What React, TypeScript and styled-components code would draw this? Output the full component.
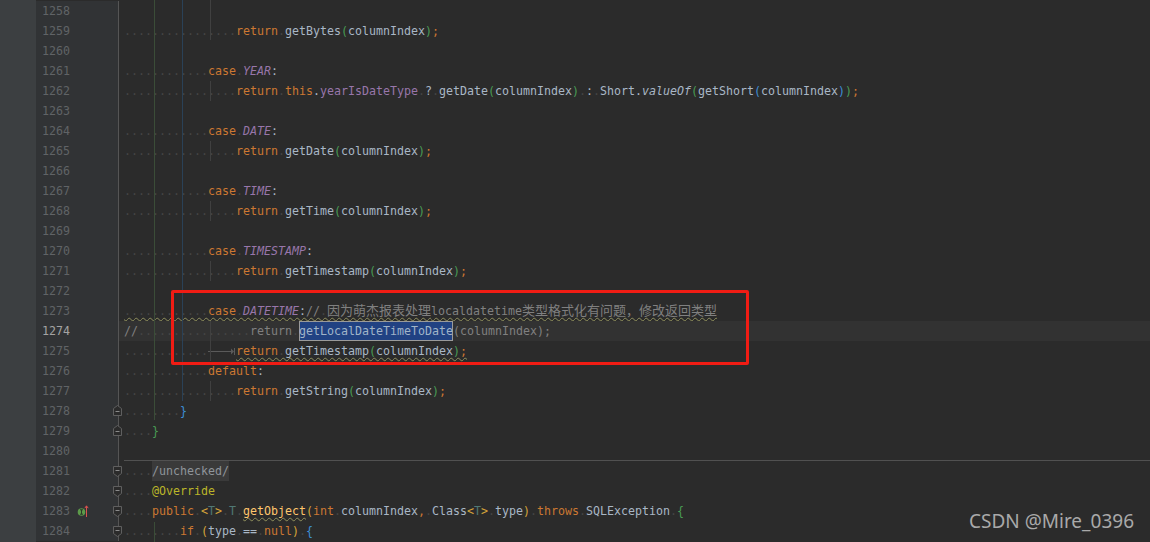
import React from "react";
import styled, { createGlobalStyle } from "styled-components";

type Kind = "dot" | "kw" | "plain" | "field" | "constant" | "method" | "green" | "blue" | "amber" | "semi" | "decl" | "anno" | "typeVar" | "comment" | "tag";
type Token = { kind: Kind; text: string; wavy?: boolean; selected?: boolean; cjk?: boolean };

interface Line {
  n: number;
  tokens?: Token[];
  active?: boolean;
  fold?: "start" | "end";
  marker?: boolean;
  separator?: boolean;
  wavyRow?: boolean;
}

const t = (kind: Kind, text: string, wavy?: boolean): Token => ({ kind, text, wavy });
const dots = (n: number) => t("dot", ".".repeat(n));

const ret = (name: string): Token[] => [
  dots(16),
  t("kw", "return"),
  dots(1),
  t("plain", name),
  t("green", "("),
  t("plain", "columnIndex"),
  t("green", ")"),
  t("semi", ";"),
];

const caseOf = (name: string): Token[] => [dots(12), t("kw", "case"), dots(1), t("constant", name), t("plain", ":")];

const lines: Line[] = [
  { n: 1258 },
  { n: 1259, tokens: ret("getBytes") },
  { n: 1260 },
  { n: 1261, tokens: caseOf("YEAR") },
  {
    n: 1262,
    tokens: [
      dots(16),
      t("kw", "return"),
      dots(1),
      t("kw", "this"),
      t("plain", "."),
      t("field", "yearIsDateType"),
      dots(1),
      t("plain", "?"),
      dots(1),
      t("plain", "getDate"),
      t("green", "("),
      t("plain", "columnIndex"),
      t("green", ")"),
      dots(1),
      t("plain", ":"),
      dots(1),
      t("plain", "Short."),
      t("method", "valueOf"),
      t("green", "("),
      t("plain", "getShort"),
      t("blue", "("),
      t("plain", "columnIndex"),
      t("blue", ")"),
      t("green", ")"),
      t("semi", ";"),
    ],
  },
  { n: 1263 },
  { n: 1264, tokens: caseOf("DATE") },
  { n: 1265, tokens: ret("getDate") },
  { n: 1266 },
  { n: 1267, tokens: caseOf("TIME") },
  { n: 1268, tokens: ret("getTime") },
  { n: 1269 },
  { n: 1270, tokens: caseOf("TIMESTAMP") },
  { n: 1271, tokens: ret("getTimestamp") },
  { n: 1272 },
  {
    n: 1273,
    wavyRow: true,
    tokens: [
      ...caseOf("DATETIME"),
      t("comment", "//"),
      dots(1),
      { kind: "comment", text: "因为萌杰报表处理", cjk: true },
      t("comment", "localdatetime"),
      { kind: "comment", text: "类型格式化有问题，修改返回类型", cjk: true },
    ],
  },
  {
    n: 1274,
    active: true,
    tokens: [
      t("comment", "//"),
      dots(16),
      t("comment", "return"),
      dots(1),
      { kind: "plain", text: "getLocalDateTimeToDate", selected: true },
      t("comment", "(columnIndex);"),
    ],
  },
  {
    n: 1275,
    tokens: [
      dots(12),
      t("tag", "TAB"),
      t("kw", "return", true),
      t("dot", ".", true),
      t("plain", "getTimestamp", true),
      t("green", "(", true),
      t("plain", "columnIndex", true),
      t("green", ")", true),
      t("semi", ";", true),
    ],
  },
  { n: 1276, tokens: [dots(12), t("kw", "default"), t("plain", ":")] },
  { n: 1277, tokens: ret("getString") },
  { n: 1278, fold: "end", tokens: [dots(8), t("blue", "}")] },
  { n: 1279, fold: "end", tokens: [dots(4), t("green", "}")] },
  { n: 1280, separator: true },
  { n: 1281, fold: "start", tokens: [dots(4), t("tag", "/unchecked/")] },
  { n: 1282, fold: "start", tokens: [dots(4), t("anno", "@Override")] },
  {
    n: 1283,
    fold: "start",
    marker: true,
    tokens: [
      dots(4),
      t("kw", "public"),
      dots(1),
      t("amber", "<"),
      t("typeVar", "T"),
      t("amber", ">"),
      dots(1),
      t("typeVar", "T"),
      dots(1),
      t("decl", "getObject", true),
      t("amber", "("),
      t("kw", "int"),
      dots(1),
      t("plain", "columnIndex"),
      t("semi", ","),
      dots(1),
      t("plain", "Class"),
      t("amber", "<"),
      t("typeVar", "T"),
      t("amber", ">"),
      dots(1),
      t("plain", "type"),
      t("amber", ")"),
      dots(1),
      t("kw", "throws"),
      dots(1),
      t("plain", "SQLException"),
      dots(1),
      t("green", "{"),
    ],
  },
  {
    n: 1284,
    fold: "start",
    tokens: [
      dots(8),
      t("kw", "if"),
      dots(1),
      t("amber", "("),
      t("plain", "type"),
      dots(1),
      t("plain", "=="),
      dots(1),
      t("kw", "null"),
      t("amber", ")"),
      dots(1),
      t("blue", "{"),
    ],
  },
];

const guides = [
  { x: 35, top: 0, height: 420, color: "#3b4d38" },
  { x: 35, top: 522, height: 20, color: "#3b4d38" },
  { x: 63, top: 0, height: 401, color: "#2a4157" },
  { x: 91, top: 0, height: 40, color: "#404040" },
  { x: 91, top: 81, height: 20, color: "#404040" },
  { x: 91, top: 141, height: 20, color: "#404040" },
  { x: 91, top: 201, height: 20, color: "#404040" },
  { x: 91, top: 261, height: 20, color: "#404040" },
  { x: 91, top: 321, height: 40, color: "#404040" },
  { x: 91, top: 381, height: 20, color: "#404040" },
];

const kindColors: Record<Kind, string> = {
  dot: "#454545",
  kw: "#cc7832",
  plain: "#a9b7c6",
  field: "#9876aa",
  constant: "#9876aa",
  method: "#a9b7c6",
  green: "#499c54",
  blue: "#3d8fd6",
  amber: "#d6a53a",
  semi: "#cc7832",
  decl: "#ffc66d",
  anno: "#bbb529",
  typeVar: "#507874",
  comment: "#808080",
  tag: "#8f959b",
};

const GlobalStyle = createGlobalStyle`
  html, body {
    margin: 0;
    padding: 0;
    background: #2b2b2b;
  }
`;

const Page = styled.div`
  position: relative;
  display: flex;
  width: 1150px;
  height: 542px;
  overflow: hidden;
  background: #2b2b2b;
  font-family: "DejaVu Sans Mono", monospace;
  font-size: 11.63px;
`;

const ToolStrip = styled.div`
  flex: 0 0 36px;
  background: #3c3f41;
`;

const Editor = styled.div`
  position: relative;
  flex: 1;
  padding-top: 1px;
`;

const Row = styled.div`
  display: flex;
  height: 20px;
  line-height: 20px;
`;

const Gutter = styled.div<{ $active?: boolean }>`
  position: relative;
  flex: 0 0 83px;
  box-sizing: border-box;
  padding-left: 6px;
  background: #313335;
  border-right: 1px solid #555555;
  color: ${({ $active }) => ($active ? "#a4a3a3" : "#606366")};
`;

const FoldIcon = styled.svg`
  position: absolute;
  right: -5px;
  top: 4px;
  z-index: 1;
`;

const MarkerIcon = styled.svg`
  position: absolute;
  left: 41px;
  top: 3px;
`;

const Code = styled.div<{ $active?: boolean; $wavy?: boolean; $separator?: boolean }>`
  position: relative;
  flex: 1;
  padding-left: 5px;
  white-space: pre;
  background: ${({ $active }) => ($active ? "#323232" : "transparent")};
  ${({ $wavy }) =>
    $wavy &&
    `
    text-decoration: underline wavy #8f8f5c 1px;
    text-underline-offset: 2px;
  `}
  ${({ $separator }) =>
    $separator &&
    `
    &::after {
      content: "";
      position: absolute;
      left: 5px;
      right: 0;
      bottom: 0;
      height: 1px;
      background: #515151;
    }
  `}
`;

const Tok = styled.span<{ $kind: Kind; $wavy?: boolean; $selected?: boolean }>`
  color: ${({ $kind }) => kindColors[$kind]};
  font-style: ${({ $kind }) => ($kind === "constant" || $kind === "method" ? "italic" : "normal")};
  ${({ $kind }) => $kind === "tag" && "display: inline-block; background: #3a3a3a;"}
  ${({ $wavy }) =>
    $wavy &&
    `
    text-decoration: underline wavy #8f8f5c 1px;
    text-underline-offset: 2px;
  `}
  ${({ $selected }) =>
    $selected &&
    `
    display: inline-block;
    height: 20px;
    color: #a0b4c8;
    background: #214283;
    box-shadow: inset 0 0 0 1px #9a9a9a;
    vertical-align: top;
  `}
`;

const Cjk = styled.span`
  font-family: "Noto Sans CJK SC", sans-serif;
  font-size: 13px;
  line-height: 1;
  color: #808080;
`;

const TabArrow = styled.svg`
  display: inline-block;
  vertical-align: top;
`;

const Guide = styled.div<{ $x: number; $top: number; $height: number; $color: string }>`
  position: absolute;
  left: ${({ $x }) => 83 + $x}px;
  top: ${({ $top }) => $top}px;
  width: 1px;
  height: ${({ $height }) => $height}px;
  background: ${({ $color }) => $color};
`;

const RedBox = styled.div`
  position: absolute;
  left: 171px;
  top: 290px;
  width: 572px;
  height: 69px;
  border: 3px solid #f01c14;
  border-radius: 2px;
`;

const Watermark = styled.div`
  position: absolute;
  right: 16px;
  top: 507px;
  font-family: "Noto Sans", sans-serif;
  font-size: 19px;
  line-height: 28px;
  color: #a9a9a9;
`;

const Fold = ({ type }: { type: "start" | "end" }) => (
  <FoldIcon width="11" height="12" viewBox="0 0 11 12">
    <path
      d={
        type === "start"
          ? "M1.5 1.5h8v7l-4 3-4-3z"
          : "M1.5 10.5h8v-7l-4-3-4 3z"
      }
      fill="#2b2b2b"
      stroke="#5f5f5f"
    />
    <path d={type === "start" ? "M3.5 5.5h4" : "M3.5 6.5h4"} stroke="#8a8a8a" />
  </FoldIcon>
);

const Marker = () => (
  <MarkerIcon width="14" height="14" viewBox="0 0 14 14">
    <circle cx="4.5" cy="8" r="3.8" fill="#5c9a4a" />
    <path d="M3 5.8h3M3 10.2h3M4.5 5.8v4.4" stroke="#2b3a26" fill="none" />
    <path d="M9.5 13V2M7.8 4.2l1.7-2.4 1.7 2.4" stroke="#d9534f" fill="none" />
  </MarkerIcon>
);

const renderToken = (token: Token, i: number) => {
  if (token.text === "TAB") {
    return (
      <TabArrow key={i} width="28" height="20" viewBox="0 0 28 20">
        <path d="M0 10.5h23" stroke="#5a5a5a" fill="none" />
        <path d="M23 7.5l3 3-3 3z" fill="#5a5a5a" />
        <path d="M26.5 7v7" stroke="#5a5a5a" fill="none" />
      </TabArrow>
    );
  }
  if (token.cjk) return <Cjk key={i}>{token.text}</Cjk>;
  return (
    <Tok key={i} $kind={token.kind} $wavy={token.wavy} $selected={token.selected}>
      {token.text}
    </Tok>
  );
};

export default function App() {
  return (
    <>
      <GlobalStyle />
      <Page>
        <ToolStrip />
        <Editor>
          {lines.map((line) => (
            <Row key={line.n}>
              <Gutter $active={line.active}>
                {line.n}
                {line.marker && <Marker />}
                {line.fold && <Fold type={line.fold} />}
              </Gutter>
              <Code $active={line.active} $wavy={line.wavyRow} $separator={line.separator}>
                {line.tokens?.map(renderToken)}
              </Code>
            </Row>
          ))}
          {guides.map((g, i) => (
            <Guide key={i} $x={g.x} $top={g.top} $height={g.height} $color={g.color} />
          ))}
        </Editor>
        <RedBox />
        <Watermark>CSDN @Mire_0396</Watermark>
      </Page>
    </>
  );
}
